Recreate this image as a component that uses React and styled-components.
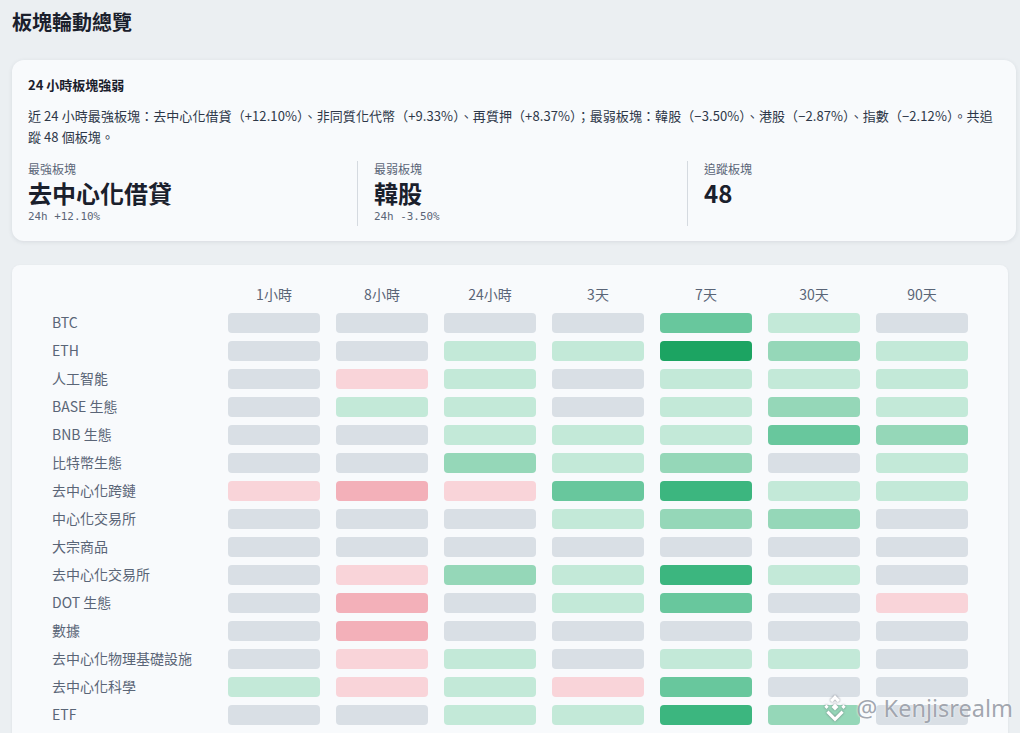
import React from "react";
import styled, { createGlobalStyle } from "styled-components";

const GlobalStyle = createGlobalStyle`
html, body {
  margin: 0;
  height: 733px;
  overflow: hidden;
  background: #ebeff2;
  font-family: "Noto Sans CJK TC", "Noto Sans", sans-serif;
  color: #1a202c;
}
`
const Page = styled.div`
  padding: 8px 4px 0 12px;
  position: relative;
  height: 733px;
  box-sizing: border-box;
`
const Heading = styled.h1`
  margin: 0 0 25px;
  font-size: 20px;
  line-height: 27px;
  font-weight: 700;
  color: #1a202c;
`
const SummaryCard = styled.section`
  background: #f8fafc;
  border-radius: 12px;
  padding: 16px;
  height: 181px;
  box-sizing: border-box;
  box-shadow: 0 1px 4px rgba(40, 50, 70, 0.1);
  margin-bottom: 24px;
`
const SummaryTitle = styled.div`
  font-size: 13px;
  line-height: 18px;
  font-weight: 700;
  margin-bottom: 11px;
`
const SummaryText = styled.p`
  margin: 0 0 14px;
  max-width: 965px;
  font-size: 13px;
  line-height: 21px;
  letter-spacing: 0.08px;
  color: #2d3748;
`
const Stats = styled.div`
  display: grid;
  grid-template-columns: 329px 330px 1fr;
`
const Stat = styled.div`
  height: 65px;
  padding-left: ${(p) => (p.$first ? "0" : "16px")};
  border-left: ${(p) => (p.$first ? "none" : "1px solid #d5dae0")};
`
const StatLabel = styled.div`
  font-size: 12px;
  line-height: 16px;
  color: #5a6577;
`
const StatValue = styled.div`
  font-size: 24px;
  line-height: 32px;
  font-weight: 700;
  color: #1a202c;
`
const StatSub = styled.div`
  margin-top: 1px;
  font-family: "DejaVu Sans Mono", monospace;
  font-size: 10.9px;
  line-height: 13px;
  color: #5a6577;
`
const HeatCard = styled.section`
  background: #f8fafc;
  border-radius: 8px;
  margin-right: 8px;
  padding: 18px 40px 40px;
  box-shadow: 0 1px 3px rgba(40, 50, 70, 0.08);
`
const HeatGrid = styled.div`
  display: grid;
  grid-template-columns: 160px repeat(7, 92px);
  column-gap: 16px;
  row-gap: 8px;
`
const ColHead = styled.div`
  font-size: 14px;
  line-height: 22px;
  height: 22px;
  text-align: center;
  color: #5a6577;
`
const RowLabel = styled.div`
  font-size: 14px;
  line-height: 18px;
  height: 20px;
  color: #5a6577;
  white-space: nowrap;
`
const colors = {
  g: "#d9dfe5",
  a: "#c3e9d8",
  b: "#95d7b8",
  c: "#68c79d",
  d: "#3cb67f",
  e: "#1ca462",
  r: "#f9d4d9",
  s: "#f3b0b9",
};
const Cell = styled.div`
  height: 20px;
  border-radius: 4px;
  background: ${(p) => colors[p.$level]};
`
const Watermark = styled.div`
  position: absolute;
  right: 7px;
  bottom: 11px;
  display: flex;
  align-items: center;
  gap: 7px;
  font-family: "Noto Sans", sans-serif;
  font-size: 23.5px;
  line-height: 28px;
  color: rgba(150, 155, 165, 0.9);
  text-shadow: 0 0 2px rgba(255, 255, 255, 0.95);
`
const WatermarkLogo = styled.svg`
  width: 28px;
  height: 28px;
  fill: #ffffff;
  filter: drop-shadow(0 0 1px rgba(90, 95, 105, 0.75));
`

const periods = ["1小時", "8小時", "24小時", "3天", "7天", "30天", "90天"];
const rows = [
  ["BTC", "ggggcag"],
  ["ETH", "ggaaeba"],
  ["人工智能", "gragaaa"],
  ["BASE 生態", "gaagaba"],
  ["BNB 生態", "ggaaacb"],
  ["比特幣生態", "ggbabga"],
  ["去中心化跨鏈", "rsrcdaa"],
  ["中心化交易所", "gggabbg"],
  ["大宗商品", "ggggggg"],
  ["去中心化交易所", "grbadag"],
  ["DOT 生態", "gsgacgr"],
  ["數據", "gsggggg"],
  ["去中心化物理基礎設施", "gragaag"],
  ["去中心化科學", "ararcgg"],
  ["ETF", "ggaadbg"],
];

export default function App() {
  return (
    <Page>
      <GlobalStyle />
      <Heading>板塊輪動總覽</Heading>
      <SummaryCard>
        <SummaryTitle>24 小時板塊強弱</SummaryTitle>
        <SummaryText>
          近 24 小時最強板塊：去中心化借貸（+12.10%）、非同質化代幣（+9.33%）、再質押（+8.37%）；最弱板塊：韓股（−3.50%）、港股（−2.87%）、指數（−2.12%）。共追蹤 48 個板塊。
        </SummaryText>
        <Stats>
          <Stat $first>
            <StatLabel>最強板塊</StatLabel>
            <StatValue>去中心化借貸</StatValue>
            <StatSub>24h +12.10%</StatSub>
          </Stat>
          <Stat>
            <StatLabel>最弱板塊</StatLabel>
            <StatValue>韓股</StatValue>
            <StatSub>24h -3.50%</StatSub>
          </Stat>
          <Stat>
            <StatLabel>追蹤板塊</StatLabel>
            <StatValue>48</StatValue>
          </Stat>
        </Stats>
      </SummaryCard>
      <HeatCard>
        <HeatGrid>
          <div />
          {periods.map((p) => (
            <ColHead key={p}>{p}</ColHead>
          ))}
          {rows.map(([name, levels]) => (
            <React.Fragment key={name}>
              <RowLabel>{name}</RowLabel>
              {levels.split("").map((l, i) => (
                <Cell key={i} $level={l} />
              ))}
            </React.Fragment>
          ))}
        </HeatGrid>
      </HeatCard>
      <Watermark>
        <WatermarkLogo viewBox="0 0 28 28">
          <path d="M14 1l5 5-2.200 2.200L14 5.400l-2.800 2.800L9 6z" />
          <path d="M5.500 10.500l2.200 2.200-2.200 2.200-2.200-2.200z M22.500 10.500l2.200 2.200-2.200 2.200-2.200-2.200z" />
          <path d="M14 9.500l3.500 3.500-3.500 3.500-3.500-3.500z" />
          <path d="M7.500 16.500l6.500 6.500 6.500-6.500 2.200 2.200L14 27.400l-8.700-8.700z" />
        </WatermarkLogo>
        <span>@ Kenjisrealm</span>
      </Watermark>
    </Page>
  );
}
